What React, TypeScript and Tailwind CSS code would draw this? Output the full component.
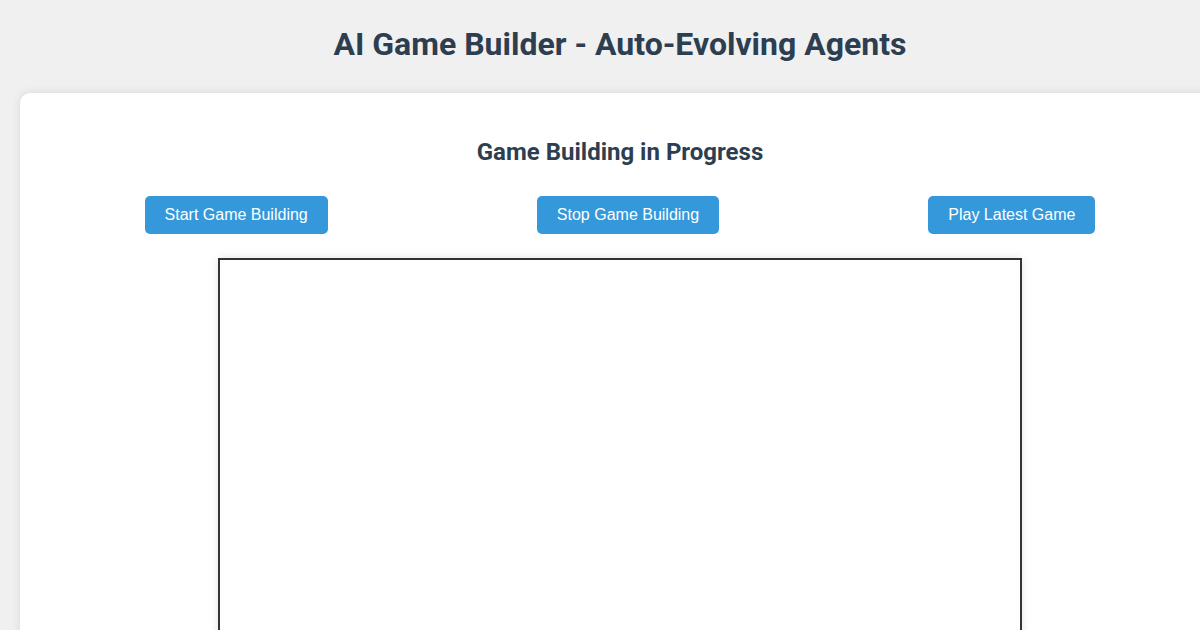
export default function App() {
  const buttons = ["Start Game Building", "Stop Game Building", "Play Latest Game"];
  return (
    <div
      className="min-h-screen w-[1240px] bg-[#f0f0f0] px-5 pt-[26px] pb-5"
      style={{ fontFamily: "Roboto, 'Liberation Sans', sans-serif" }}
    >
      <h1 className="m-0 mb-[29.5px] text-center text-[32px] font-bold leading-[37.5px] text-[#2c3e50]">
        AI Game Builder - Auto-Evolving Agents
      </h1>
      <div className="w-[1200px] rounded-[10px] bg-white px-5 pt-[45px] pb-5 shadow-[0_0_10px_rgba(0,0,0,0.1)]">
        <h2 className="m-0 text-center text-[24px] font-bold leading-[28px] text-[#2c3e50]">
          Game Building in Progress
        </h2>
        <div className="mt-[30px] flex justify-around">
          {buttons.map((label) => (
            <button
              key={label}
              className="rounded-[5px] bg-[#3498db] px-5 py-[10px] text-[16px] leading-[18px] text-white"
              style={{ fontFamily: "'Liberation Sans', Arial, sans-serif" }}
            >
              {label}
            </button>
          ))}
        </div>
        <div className="mt-[24px] flex justify-center">
          <div className="h-[604px] w-[804px] border-2 border-[#333] bg-white shadow-[0_0_10px_rgba(0,0,0,0.1)]" />
        </div>
      </div>
    </div>
  );
}
